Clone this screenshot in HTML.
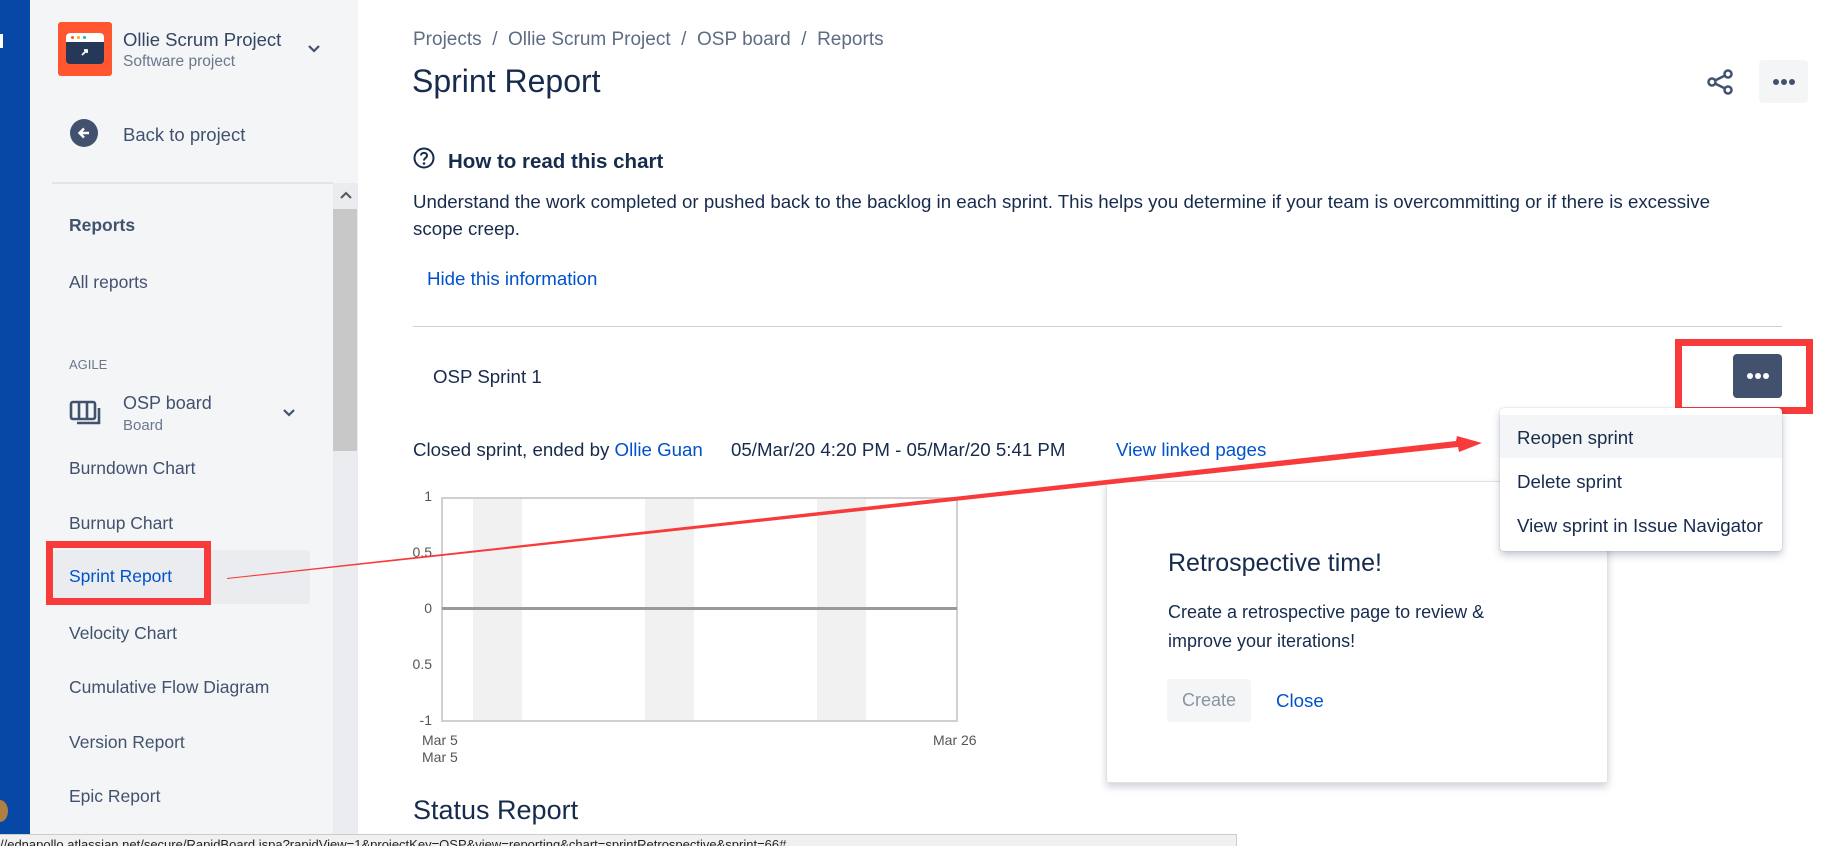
<!DOCTYPE html>
<html><head><meta charset="utf-8"><style>
*{margin:0;padding:0;box-sizing:border-box}
body{width:1827px;height:846px;overflow:hidden;background:#fff;font-family:"Liberation Sans",sans-serif;color:#172b4d;position:relative}
.a{position:absolute;white-space:nowrap}
.side{color:#42526e;font-size:18px}
.m{font-size:18.7px}
.link{color:#0052cc}
</style></head><body>
<div class="a" style="left:0;top:0;width:30px;height:846px;background:linear-gradient(#0747a6,#0747a6)"></div>
<div class="a" style="left:0;top:34px;width:3px;height:14px;background:#fff"></div>
<div class="a" style="left:-8px;top:800px;width:16px;height:22px;border-radius:50%;background:#b08040"></div>
<div class="a" style="left:30px;top:0;width:328px;height:846px;background:#f4f5f7"></div>
<div class="a" style="left:333px;top:183px;width:25px;height:663px;background:#ebecf0"></div>
<div class="a" style="left:333px;top:209px;width:24px;height:242px;background:#c8c8c8"></div>
<svg class="a" style="left:339px;top:190px" width="14" height="10"><path d="M2 8 L7 3 L12 8" stroke="#555" stroke-width="2" fill="none"/></svg>
<div class="a" style="left:52px;top:182px;width:281px;height:2px;background:#e4e5ea"></div>
<!-- logo -->
<div class="a" style="left:58px;top:22px;width:54px;height:54px;background:#ff5630;border-radius:3px"></div>
<div class="a" style="left:66px;top:33px;width:38px;height:31px;background:#253858;border-radius:4px;overflow:hidden"><div style="height:9px;background:#fff"></div></div>
<div class="a" style="left:71px;top:36px;width:3px;height:3px;border-radius:50%;background:#ff5630"></div>
<div class="a" style="left:77px;top:36px;width:3px;height:3px;border-radius:50%;background:#ffab00"></div>
<div class="a" style="left:83px;top:36px;width:3px;height:3px;border-radius:50%;background:#00b8d9"></div>
<svg class="a" style="left:80px;top:47px" width="10" height="10"><path d="M2 8 L7 3 M4 3 L7 3 L7 6" stroke="#fff" stroke-width="1.8" fill="none"/></svg>
<div class="a" style="left:123px;top:29px;font-size:18.5px;color:#344563">Ollie Scrum Project</div>
<div class="a" style="left:123px;top:53px;font-size:15.5px;color:#6b778c">Software project</div>
<svg class="a" style="left:307px;top:44px" width="14" height="10"><path d="M2 2 L7 7 L12 2" stroke="#42526e" stroke-width="2.2" fill="none"/></svg>
<div class="a" style="left:70px;top:119px;width:28px;height:28px;border-radius:50%;background:#42526e"></div>
<svg class="a" style="left:74px;top:123px" width="20" height="20"><path d="M15 10 H6 M10 5.5 L5.5 10 L10 14.5" stroke="#fff" stroke-width="2.4" fill="none"/></svg>
<div class="a side" style="left:123px;top:124px;font-size:18.5px">Back to project</div>
<div class="a side" style="left:69px;top:215px;font-weight:bold;font-size:17.5px">Reports</div>
<div class="a side" style="left:69px;top:272px;font-size:17.5px">All reports</div>
<div class="a" style="left:69px;top:357px;font-size:13px;color:#6b778c">AGILE</div>
<svg class="a" style="left:69px;top:400px" width="32" height="26"><rect x="2" y="2" width="24" height="17" rx="2" stroke="#42526e" stroke-width="2.6" fill="none"/><path d="M10 3 V18 M18 3 V18 M30 8 V23 H8" stroke="#42526e" stroke-width="2.6" fill="none"/></svg>
<div class="a side" style="left:123px;top:393px">OSP board</div>
<div class="a" style="left:123px;top:417px;font-size:15px;color:#6b778c">Board</div>
<svg class="a" style="left:282px;top:408px" width="14" height="10"><path d="M2 2 L7 7 L12 2" stroke="#42526e" stroke-width="2.2" fill="none"/></svg>
<div class="a side" style="left:69px;top:458px;font-size:17.5px">Burndown Chart</div>
<div class="a side" style="left:69px;top:513px;font-size:17.5px">Burnup Chart</div>
<div class="a" style="left:53px;top:550px;width:257px;height:54px;background:#ebecf0;border-radius:4px"></div>
<div class="a side" style="left:69px;top:566px;font-size:17.5px;color:#0052cc">Sprint Report</div>
<div class="a" style="left:46px;top:541px;width:165px;height:64px;border:7px solid #f83a3a"></div>
<div class="a side" style="left:69px;top:623px;font-size:17.5px">Velocity Chart</div>
<div class="a side" style="left:69px;top:677px;font-size:17.5px">Cumulative Flow Diagram</div>
<div class="a side" style="left:69px;top:732px;font-size:17.5px">Version Report</div>
<div class="a side" style="left:69px;top:786px;font-size:17.5px">Epic Report</div>

<!-- main -->
<div class="a" style="left:413px;top:29px;font-size:19px;color:#5e6c84">Projects &nbsp;/&nbsp; Ollie Scrum Project &nbsp;/&nbsp; OSP board &nbsp;/&nbsp; Reports</div>
<div class="a" style="left:412px;top:63px;font-size:32px;color:#172b4d">Sprint Report</div>
<svg class="a" style="left:1706px;top:68px" width="30" height="28"><circle cx="6" cy="14" r="3.5" stroke="#42526e" stroke-width="2.5" fill="none"/><circle cx="22" cy="6" r="3.5" stroke="#42526e" stroke-width="2.5" fill="none"/><circle cx="22" cy="22" r="3.5" stroke="#42526e" stroke-width="2.5" fill="none"/><path d="M9 12.5 L19 7.5 M9 15.5 L19 20.5" stroke="#42526e" stroke-width="2.5"/></svg>
<div class="a" style="left:1759px;top:60px;width:49px;height:43px;background:#f4f5f7;border-radius:4px"></div>
<svg class="a" style="left:1772px;top:77px" width="24" height="10"><circle cx="4" cy="5" r="3" fill="#42526e"/><circle cx="12" cy="5" r="3" fill="#42526e"/><circle cx="20" cy="5" r="3" fill="#42526e"/></svg>
<svg class="a" style="left:413px;top:147px" width="22" height="22"><circle cx="11" cy="11" r="9.5" stroke="#172b4d" stroke-width="2" fill="none"/><path d="M8 8.5 C8 5 14 5 14 8.5 C14 11 11 11 11 13.5" stroke="#172b4d" stroke-width="2" fill="none"/><circle cx="11" cy="16.5" r="1.3" fill="#172b4d"/></svg>
<div class="a" style="left:448px;top:150px;font-size:20.5px;font-weight:bold">How to read this chart</div>
<div class="a m" style="left:413px;top:191px">Understand the work completed or pushed back to the backlog in each sprint. This helps you determine if your team is overcommitting or if there is excessive</div>
<div class="a m" style="left:413px;top:218px">scope creep.</div>
<div class="a m link" style="left:427px;top:268px">Hide this information</div>
<div class="a" style="left:413px;top:326px;width:1369px;height:1px;background:#d0d0d0"></div>
<div class="a m" style="left:433px;top:366px">OSP Sprint 1</div>
<div class="a" style="left:1733px;top:354px;width:49px;height:44px;background:#42526e;border-radius:4px"></div>
<svg class="a" style="left:1746px;top:371px" width="24" height="10"><circle cx="4" cy="5" r="3" fill="#fff"/><circle cx="12" cy="5" r="3" fill="#fff"/><circle cx="20" cy="5" r="3" fill="#fff"/></svg>
<div class="a" style="left:1675px;top:339px;width:138px;height:75px;border:7px solid #f83a3a"></div>
<div class="a m" style="left:413px;top:439px">Closed sprint, ended by <span class="link">Ollie Guan</span></div>
<div class="a m" style="left:731px;top:439px">05/Mar/20 4:20 PM - 05/Mar/20 5:41 PM</div>
<div class="a m link" style="left:1116px;top:439px">View linked pages</div>

<!-- chart -->
<div class="a" style="left:441px;top:497px;width:517px;height:225px;border:2px solid #d0d0d0"></div>
<div class="a" style="left:473px;top:499px;width:49px;height:221px;background:#f1f1f1"></div>
<div class="a" style="left:645px;top:499px;width:49px;height:221px;background:#f1f1f1"></div>
<div class="a" style="left:817px;top:499px;width:49px;height:221px;background:#f1f1f1"></div>
<div class="a" style="left:442px;top:607px;width:515px;height:3px;background:#999"></div>
<div class="a" style="left:420px;top:488px;font-size:14px;color:#555;text-align:right;width:12px">1</div>
<div class="a" style="left:402px;top:544px;font-size:14px;color:#555;text-align:right;width:30px">0.5</div>
<div class="a" style="left:420px;top:600px;font-size:14px;color:#555;text-align:right;width:12px">0</div>
<div class="a" style="left:402px;top:656px;font-size:14px;color:#555;text-align:right;width:30px">0.5</div>
<div class="a" style="left:410px;top:712px;font-size:14px;color:#555;text-align:right;width:22px">-1</div>
<div class="a" style="left:422px;top:732px;font-size:14px;color:#555;line-height:17px">Mar 5<br>Mar 5</div>
<div class="a" style="left:933px;top:732px;font-size:14px;color:#555">Mar 26</div>
<div class="a" style="left:413px;top:795px;font-size:27px">Status Report</div>

<!-- retro card -->
<div class="a" style="left:1106px;top:481px;width:502px;height:302px;background:#fff;border:1px solid #e2e2e2;border-radius:3px;box-shadow:0 4px 8px rgba(9,30,66,.2)"></div>
<div class="a" style="left:1168px;top:549px;font-size:25px">Retrospective time!</div>
<div class="a" style="left:1168px;top:598px;font-size:18px;line-height:29px">Create a retrospective page to review &amp;<br>improve your iterations!</div>
<div class="a" style="left:1167px;top:679px;width:84px;height:43px;background:#f4f5f7;border-radius:3px;color:#8993a4;font-size:18px;text-align:center;line-height:43px">Create</div>
<div class="a m link" style="left:1276px;top:690px">Close</div>

<!-- dropdown -->
<div class="a" style="left:1500px;top:408px;width:282px;height:143px;background:#fff;border-radius:4px;box-shadow:0 4px 8px rgba(9,30,66,.25),0 0 1px rgba(9,30,66,.3)"></div>
<div class="a" style="left:1500px;top:415px;width:282px;height:43px;background:#f4f5f7"></div>
<div class="a m" style="left:1517px;top:427px">Reopen sprint</div>
<div class="a m" style="left:1517px;top:471px">Delete sprint</div>
<div class="a m" style="left:1517px;top:515px">View sprint in Issue Navigator</div>

<!-- arrow -->
<svg class="a" style="left:0;top:0" width="1827" height="846"><polygon points="227,578 1456,441 1457,436 1482,443 1459,452 1458,447 227,579" fill="#f83a3a"/></svg>

<!-- status bar -->
<div class="a" style="left:0;top:834px;width:1237px;height:12px;background:#f0f0f0;border-top:1px solid #ccc;border-right:1px solid #ccc;font-size:13px;color:#222;overflow:hidden;line-height:20px">//ednapollo.atlassian.net/secure/RapidBoard.jspa?rapidView=1&amp;projectKey=OSP&amp;view=reporting&amp;chart=sprintRetrospective&amp;sprint=66#</div>
</body></html>
